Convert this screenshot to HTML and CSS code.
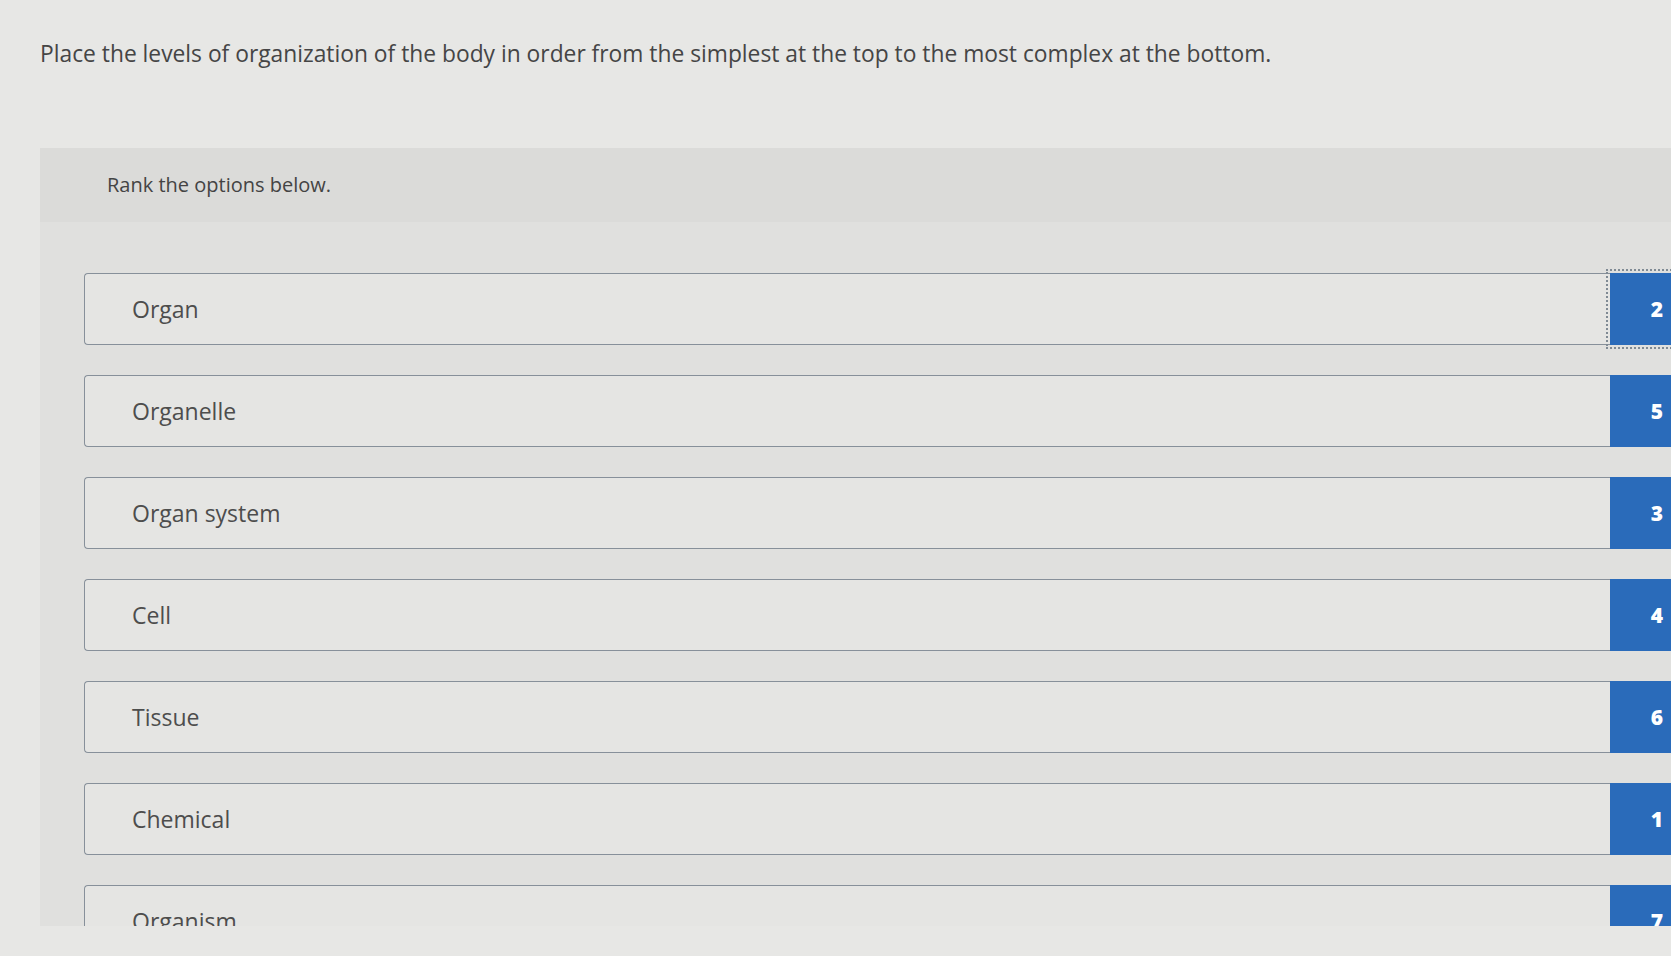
FILE: index.html
```html
<!DOCTYPE html>
<html lang="en">
<head>
  <meta charset="UTF-8">
  <meta name="viewport" content="width=device-width, initial-scale=1.0">
  <title>Ranking question</title>
  <link rel="stylesheet" href="styles.css">
</head>
<body>
  <div class="question">
    <p class="prompt">Place the levels of organization of the body in order from the simplest at the top to the most complex at the bottom.</p>

    <div class="panel">
      <div class="panel-head">Rank the options below.</div>
      <ul class="rank-list">
        <li class="rank-item focused"><span class="label">Organ</span><span class="rank">2</span></li>
        <li class="rank-item"><span class="label">Organelle</span><span class="rank">5</span></li>
        <li class="rank-item"><span class="label">Organ system</span><span class="rank">3</span></li>
        <li class="rank-item"><span class="label">Cell</span><span class="rank">4</span></li>
        <li class="rank-item"><span class="label">Tissue</span><span class="rank">6</span></li>
        <li class="rank-item"><span class="label">Chemical</span><span class="rank">1</span></li>
        <li class="rank-item"><span class="label">Organism</span><span class="rank">7</span></li>
      </ul>
    </div>
  </div>
</body>
</html>
```

FILE: styles.css
```css
body {
  margin: 0;
  background: #e7e7e5;
  color: #3c3c3c;
  font-family: 'Open Sans', 'Liberation Sans', sans-serif;
  overflow: hidden;
  height: 956px;
}
.question {
  padding: 0 0 0 40px;
}
.prompt {
  margin: 0;
  padding: 38px 0 0 0;
  font-size: 22.8px;
  line-height: 32px;
  color: #454545;
}
.panel {
  margin-top: 78px;
  width: 1700px;
  height: 778px;
  overflow: hidden;
  background: #e0e0de;
}
.panel-head {
  height: 74px;
  line-height: 74px;
  padding-left: 67px;
  font-size: 20px;
  color: #444;
  background: #dbdbd9;
}
.rank-list {
  list-style: none;
  margin: 0;
  padding: 51px 0 0 44px;
  display: flex;
  flex-direction: column;
  gap: 30px;
}
.rank-item {
  display: flex;
  height: 72px;
}
.label {
  flex: 1;
  display: flex;
  align-items: center;
  padding-left: 47px;
  font-size: 23px;
  color: #4d4d4d;
  background: #e5e5e3;
  border: 1px solid #87909a;
  border-right: none;
  border-radius: 4px 0 0 4px;
}
.rank {
  width: 94px;
  display: flex;
  align-items: center;
  justify-content: center;
  margin-right: 36px;
  background: #2a6bba;
  color: #fff;
  font-weight: 800;
  font-size: 21px;
}
.focused .rank {
  outline: 2px dotted #7f8a94;
  outline-offset: 2px;
}
```
